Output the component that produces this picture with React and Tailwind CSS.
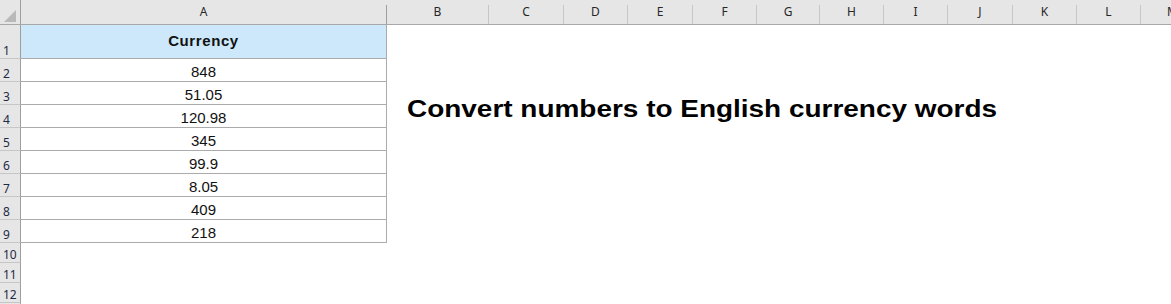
import React from "react";

const COLUMNS = [
	{ label: "A", width: "w-[366px]" },
	{ label: "B", width: "w-[102px]" },
	{ label: "C", width: "w-[75px]" },
	{ label: "D", width: "w-[64px]" },
	{ label: "E", width: "w-[65px]" },
	{ label: "F", width: "w-[64px]" },
	{ label: "G", width: "w-[63px]" },
	{ label: "H", width: "w-[64px]" },
	{ label: "I", width: "w-[64px]" },
	{ label: "J", width: "w-[65px]" },
	{ label: "K", width: "w-[64px]" },
	{ label: "L", width: "w-[64px]" },
	{ label: "M", width: "w-[64px]" },
];

const VALUES = ["848", "51.05", "120.98", "345", "99.9", "8.05", "409", "218"];

function ColumnHeader({ col, first }) {
	return (
		<div className={`${col.width} relative flex h-full shrink-0 items-center justify-center`}>
			<span className="pr-px text-[12px] leading-none text-[#262626]">{col.label}</span>
			<span
				className={
					first
						? "absolute right-0 bottom-0 h-[19px] w-px bg-[#9e9e9e]"
						: "absolute right-0 bottom-0 h-[19px] w-px bg-[#c6c6c6]"
				}
			/>
		</div>
	);
}

function RowHeader({ n, height }) {
	return (
		<div
			className={`${height} flex w-[21px] shrink-0 items-end border-r border-b border-r-[#9e9e9e] border-b-[#c6c6c6] bg-[#e6e6e6] pb-[1px] pl-[3px] text-[12px] leading-none text-[#1f2a44]`}
		>
			{n}
		</div>
	);
}

export default function App() {
	return (
		<div className="h-[304px] w-[1171px] overflow-hidden bg-white font-['Noto_Sans',sans-serif]">
			{/* column header bar */}
			<div className="flex h-[25px] border-b border-[#a8a8a8] bg-[#e6e6e6]">
				<div className="relative flex w-[21px] shrink-0 items-end justify-end border-r border-[#9e9e9e] pr-[4px] pb-[2px]">
					<svg width="12" height="12" viewBox="0 0 12 12">
						<polygon points="12,0 12,12 0,12" fill="#b9b9b9" />
					</svg>
				</div>
				{COLUMNS.map((col, i) => (
					<ColumnHeader key={col.label} col={col} first={i === 0} />
				))}
			</div>

			<div className="flex">
				<div className="flex flex-col">
					{/* header row */}
					<div className="flex">
						<RowHeader n={1} height="h-[34px]" />
						<div className="flex h-[34px] w-[366px] items-center justify-center border-r border-b border-[#ababab] bg-[#cce8fa] font-['Liberation_Sans',Arial,sans-serif] text-[15px] font-bold tracking-[0.6px] text-[#111]">
							Currency
						</div>
					</div>
					{VALUES.map((v, i) => (
						<div key={v} className="flex">
							<RowHeader n={i + 2} height="h-[23px]" />
							<div className="flex h-[23px] w-[366px] items-end justify-center border-r border-b border-[#ababab] pb-[2px] font-['Liberation_Sans',Arial,sans-serif] text-[15px] leading-none text-[#111]">
								{v}
							</div>
						</div>
					))}
					{[10, 11, 12, ""].map((n) => (
						<div key={n} className="flex">
							<RowHeader n={n} height="h-[20px]" />
						</div>
					))}
				</div>

				<div className="pt-[72px] pl-[20px]">
					<h1 className="origin-left scale-x-[1.215] font-['Liberation_Sans',Arial,sans-serif] text-[23px] leading-[25px] font-bold whitespace-nowrap text-black">
						Convert numbers to English currency words
					</h1>
				</div>
			</div>
		</div>
	);
}
